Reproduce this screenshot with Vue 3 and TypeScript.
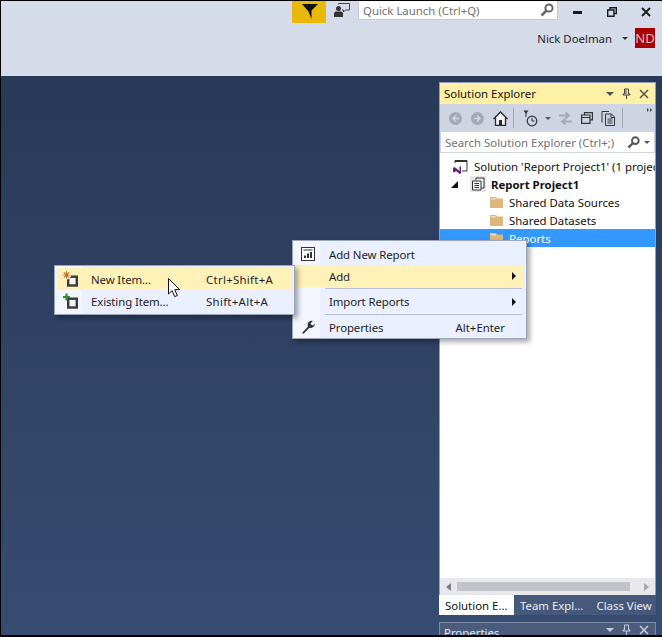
<script setup lang="ts">
const treeItems = [
  { label: 'Shared Data Sources', selected: false },
  { label: 'Shared Datasets', selected: false },
  { label: 'Reports', selected: true },
]
</script>

<template>
  <div class="frame">
    <header class="topbar">
      <div class="row-one">
        <div class="filter">
          <svg width="16" height="15" viewBox="0 0 16 15"><path d="M0 0h16L9.500 6.500V15L6.500 7.500z" fill="#111" /></svg>
        </div>
        <svg class="feedback" width="16" height="14" viewBox="0 0 16 14">
          <circle cx="4.500" cy="5.500" r="2.500" fill="#333" />
          <path d="M0 14v-4l1.500-1.500h6L9 10v4z" fill="#333" />
          <path d="M4.500 1.500V.5h11v6.500h-4l-2 2V7H8" fill="none" stroke="#444" />
        </svg>
        <div class="quick">
          <span>Quick Launch (Ctrl+Q)</span>
          <svg width="14" height="14" viewBox="0 0 14 14"><circle cx="9" cy="5" r="3.600" fill="none" stroke="#666" stroke-width="2" /><path d="M6.500 7.500L1.500 12.500" stroke="#666" stroke-width="2.500" /></svg>
        </div>
        <div class="winctl">
          <svg width="9" height="3" viewBox="0 0 9 3" class="min"><rect width="9" height="3" fill="#1a1a1a" /></svg>
          <svg width="10" height="10" viewBox="0 0 10 10"><path d="M3 2.500V.7h6.300v5.800H7M.7 3h6.300v6.300H.7z" fill="none" stroke="#1a1a1a" stroke-width="1.400" /></svg>
          <svg width="10" height="10" viewBox="0 0 10 10"><path d="M1 1l8 8M9 1L1 9" stroke="#1a1a1a" stroke-width="1.800" /></svg>
        </div>
      </div>
      <div class="row-two">
        <span class="user">Nick Doelman</span>
        <span class="caret"></span>
        <span class="avatar">ND</span>
      </div>
    </header>

    <main class="workspace">
      <aside class="column">
        <section class="explorer">
          <div class="titlebar">
            <span>Solution Explorer</span>
            <span class="title-tools">
              <span class="caret dark"></span>
              <svg width="9" height="12" viewBox="0 0 9 12"><path d="M2.500 1h4v5h1.500v1H1V6h1.500zM4 1.500v4.500M4.500 7v4" fill="none" stroke="#444" /></svg>
              <svg width="10" height="10" viewBox="0 0 10 10"><path d="M1 1l8 8M9 1L1 9" stroke="#555" stroke-width="1.500" /></svg>
            </span>
          </div>
          <div class="toolbar">
            <svg width="13" height="13" viewBox="0 0 13 13"><circle cx="6.500" cy="6.500" r="6.500" fill="#a5a9b2" /><path d="M7 3.500L4 6.500l3 3M4 6.500h6" fill="none" stroke="#d0d6e4" stroke-width="1.500" /></svg>
            <svg class="gap-next" width="13" height="13" viewBox="0 0 13 13"><circle cx="6.500" cy="6.500" r="6.500" fill="#a5a9b2" /><path d="M6 3.500l3 3-3 3M9 6.500H3" fill="none" stroke="#d0d6e4" stroke-width="1.500" /></svg>
            <svg class="gap-home" width="15" height="15" viewBox="0 0 15 15"><path d="M2.500 6.500v8h10v-8L7.500 1.500z" fill="#f2f3f7" /><path d="M.5 8L7.500 1l7 7M2.500 6.500v8h10v-8" fill="none" stroke="#2a2a2a" stroke-width="1.300" /><rect x="6" y="9" width="3" height="5.500" fill="#2a2a2a" /></svg>
            <span class="divider home-divider"></span>
            <svg class="gap-clock" width="15" height="17" viewBox="0 0 15 17"><circle cx="9" cy="11" r="4.800" fill="none" stroke="#333" stroke-width="1.200" /><path d="M9 8v3h2.500" fill="none" stroke="#333" /><path d="M.5.500h5L3 4z" fill="#333" /><path d="M3 3v4" stroke="#333" /></svg>
            <span class="caret dark small"></span>
            <svg class="gap-sync" width="13" height="13" viewBox="0 0 13 13"><path d="M0 3.500h9M6.500 .5l3.500 3-3.500 3M13 9.500H4M6.500 6.500L3 9.500l3.500 3" fill="none" stroke="#a5a9b2" stroke-width="1.800" /></svg>
            <svg class="gap-copy" width="12" height="12" viewBox="0 0 12 12"><path d="M3.500 2.500V.6h7.900v7.300H9M.6 3h8.400v8.400H.6zM.6 5.500H9" fill="none" stroke="#333" stroke-width="1.200" /></svg>
            <svg class="gap-pages" width="14" height="15" viewBox="0 0 14 15"><path d="M1 11.500V.5h7M4.500 3h6l3 3v8.500h-9zM10 3v3.500h3.500" fill="none" stroke="#333" /><path d="M6.500 8h5M6.500 10h5M6.500 12h5" stroke="#333" /></svg>
            <span class="divider last-divider"></span>
            <span class="more">
              <span class="tri"></span><span class="tri"></span>
            </span>
          </div>
          <div class="search">
            <span>Search Solution Explorer (Ctrl+;)</span>
            <span class="search-tools">
              <svg width="13" height="13" viewBox="0 0 14 14"><circle cx="9" cy="5" r="3.600" fill="none" stroke="#555" stroke-width="2" /><path d="M6.500 7.500L1.500 12.500" stroke="#555" stroke-width="2.500" /></svg>
              <span class="caret dark small"></span>
            </span>
          </div>
          <div class="tree">
            <div class="node solution">
              <svg width="15" height="15" viewBox="0 0 15 15">
                <path d="M2 4V1.500h12v10.500H9" fill="none" stroke="#333" />
                <path d="M2 1h12v2H2z" fill="#333" />
                <path d="M1 8l2 1 3.500 3V7l1.500.8v6.500L6.500 15 3 12l-1.500 1.500L0 12.800V9.200z" fill="#68217a" />
              </svg>
              <span>Solution 'Report Project1' (1 project)</span>
            </div>
            <div class="node project">
              <span class="expander"></span>
              <svg class="project-icon" width="16" height="16" viewBox="0 0 16 16">
                <rect width="16" height="16" fill="#e6e6e6" />
                <path d="M6 4V2h8v10h-2.500M2.500 5h8.500v9H2.500z" fill="#f6f6f6" stroke="#333" />
                <path d="M4.500 7.500h4.500M4.500 9.500h4.500M4.500 11.500h4.500" stroke="#333" />
              </svg>
              <b>Report Project1</b>
            </div>
            <div v-for="item in treeItems" :key="item.label" class="node leaf" :class="{ selected: item.selected }">
              <svg class="folder" width="13" height="11" viewBox="0 0 13 11">
                <path d="M0 0h6l1 1.500h6V11H0z" fill="#dcb67a" />
                <path d="M1 1h4.500l1 1.500H1z" fill="#eedcb8" />
              </svg>
              <span>{{ item.label }}</span>
            </div>
          </div>
          <div class="hscroll">
            <span class="arrow left"></span>
            <span class="thumb"></span>
            <span class="arrow right"></span>
          </div>
        </section>
        <nav class="tabs">
          <span class="tab active">Solution E...</span>
          <span class="tab">Team Expl...</span>
          <span class="tab">Class View</span>
        </nav>
        <section class="properties">
          <span>Properties</span>
          <span class="title-tools light">
            <span class="caret light-caret"></span>
            <svg width="9" height="12" viewBox="0 0 9 12"><path d="M2.500 1h4v5h1.500v1H1V6h1.500zM4.500 7v4" fill="none" stroke="#c8cfdc" /></svg>
            <svg width="10" height="10" viewBox="0 0 10 10"><path d="M1 1l8 8M9 1L1 9" stroke="#c8cfdc" stroke-width="1.500" /></svg>
          </span>
        </section>
      </aside>
    </main>

    <div class="menu menu-main">
      <div class="item">
        <span class="gutter">
          <svg width="14" height="14" viewBox="0 0 14 14"><rect x=".5" y=".5" width="13" height="13" fill="#fff" stroke="#333" /><path d="M2.500 3h9" stroke="#333" /><path d="M3 11V8.500h2V11zM6 11V6.500h2V11zM9 11V5h2v6z" fill="#333" /></svg>
        </span>
        <span class="label">Add New Report</span>
      </div>
      <div class="item hot">
        <span class="gutter"></span>
        <span class="label">Add</span>
        <span class="submenu"></span>
      </div>
      <div class="rule"></div>
      <div class="item tight">
        <span class="gutter"></span>
        <span class="label">Import Reports</span>
        <span class="submenu"></span>
      </div>
      <div class="rule"></div>
      <div class="item">
        <span class="gutter">
          <svg width="14" height="14" viewBox="0 0 14 14"><path d="M1 13l6-6.500C6 4 7 1 10.500.8c.6 0 1 .1 1.300.3L9.500 3.500l1 1.500 1.800.4 1.400-2.200c.5 2.800-1.800 5.400-5.200 4.500L2.500 13.800z" fill="#333" /></svg>
        </span>
        <span class="label">Properties</span>
        <span class="shortcut">Alt+Enter</span>
      </div>
    </div>

    <div class="menu menu-sub">
      <div class="item hot">
        <span class="gutter">
          <svg width="16" height="16" viewBox="0 0 16 16">
            <rect x="6.200" y="5.700" width="8.600" height="8.800" fill="#f4f4f4" stroke="#3a3a3a" stroke-width="2.400" />
            <circle cx="4.500" cy="4" r="4.500" fill="#fff" />
            <path d="M4.500 0v8M.5 4h8M1.700 1.200l5.600 5.600M7.300 1.200L1.700 6.800" stroke="#c8761a" stroke-width="1.100" />
            <circle cx="4.500" cy="4" r="1.500" fill="#c8761a" />
          </svg>
        </span>
        <span class="label">New Item...</span>
        <span class="shortcut">Ctrl+Shift+A</span>
      </div>
      <div class="item">
        <span class="gutter">
          <svg width="16" height="16" viewBox="0 0 16 16">
            <rect x="6.200" y="5.700" width="8.600" height="8.800" fill="#f4f4f4" stroke="#3a3a3a" stroke-width="2.400" />
            <path d="M4.500 .5v7M1 4h7" stroke="#2f8f2f" stroke-width="2.200" />
          </svg>
        </span>
        <span class="label">Existing Item...</span>
        <span class="shortcut">Shift+Alt+A</span>
      </div>
    </div>

    <svg class="cursor" width="13" height="20" viewBox="0 0 13 20">
      <path d="M.5.500v15.500l3.600-3.400 2.600 6 2.600-1.100-2.600-5.900h5z" fill="#fff" stroke="#111" />
    </svg>
  </div>
</template>

<style scoped>
.frame {
  position: relative;
  width: 662px;
  height: 637px;
  box-sizing: border-box;
  border-top: 1px solid #000;
  border-left: 1px solid #000;
  border-bottom: 2px solid #000;
  display: flex;
  flex-direction: column;
  overflow: hidden;
  font-family: "Noto Sans", "Open Sans", sans-serif;
  font-size: 11.4px;
  color: #1e1e1e;
  background: #2b3a58;
}
.topbar {
  height: 75px;
  flex: none;
  background: #d6dbe9;
}
.row-one {
  display: flex;
  align-items: flex-start;
  height: 24px;
  padding-left: 291px;
}
.filter {
  width: 34px;
  height: 22px;
  background: #e8b908;
  display: flex;
  justify-content: center;
  align-items: flex-start;
  padding: 3px 0 0 1px;
  box-sizing: border-box;
}
.feedback {
  margin: 2px 8px 0 8px;
  flex: none;
}
.quick {
  width: 200px;
  height: 19px;
  box-sizing: border-box;
  background: #fff;
  border: 1px solid #c3c9d8;
  border-top: 0;
  color: #717171;
  display: flex;
  justify-content: space-between;
  align-items: center;
  padding: 0 3px 0 4px;
}
.winctl {
  display: flex;
  align-items: center;
  height: 22px;
  margin-left: 15px;
  gap: 24px;
}
.winctl .min { margin-right: 1px; }
.row-two {
  display: flex;
  align-items: center;
  justify-content: flex-end;
  height: 20px;
  margin-top: 3px;
  padding-right: 7px;
}
.caret {
  display: inline-block;
  border-left: 3px solid transparent;
  border-right: 3px solid transparent;
  border-top: 3px solid #333;
  margin: 0 7px 0 10px;
}
.caret.dark {
  margin: 0;
  border-left-width: 4px;
  border-right-width: 4px;
  border-top: 4px solid #555;
}
.caret.small {
  border-left-width: 3px;
  border-right-width: 3px;
  border-top-width: 3px;
}
.avatar {
  width: 20px;
  height: 20px;
  background: #a80000;
  color: #e6b9b9;
  display: flex;
  align-items: center;
  justify-content: center;
  font-size: 13px;
}
.workspace {
  flex: 1;
  min-height: 0;
  display: flex;
  justify-content: flex-end;
  background: linear-gradient(#293a58, #364c71);
  padding-right: 6px;
}
.column {
  width: 217px;
  display: flex;
  flex-direction: column;
  padding-top: 6px;
}
.explorer {
  flex: 1;
  min-height: 0;
  display: flex;
  flex-direction: column;
  border: 1px solid #93a0b8;
  border-bottom: 0;
  background: #fff;
}
.titlebar {
  height: 21px;
  flex: none;
  background: #fff0a8;
  padding: 0 6px 0 4px;
  display: flex;
  justify-content: space-between;
  align-items: center;
  color: #111;
}
.title-tools {
  display: flex;
  align-items: center;
  gap: 8px;
}
.toolbar {
  height: 28px;
  flex: none;
  background: #ced4e2;
  display: flex;
  align-items: center;
  padding-left: 9px;
  position: relative;
}
.gap-next { margin-left: 9px; }
.gap-home { margin-left: 9px; }
.divider {
  width: 1px;
  height: 20px;
  background: #9da5b7;
}
.home-divider { margin-left: 5px; }
.gap-clock { margin-left: 9px; }
.toolbar .caret { margin-left: 7px; }
.gap-sync { margin-left: 8px; }
.gap-copy { margin-left: 9px; }
.gap-pages { margin-left: 8px; }
.last-divider { margin-left: 7px; }
.more {
  position: absolute;
  right: 3px;
  top: 4px;
  display: flex;
  gap: 1px;
}
.tri {
  border-left: 2px solid #444;
  border-top: 2px solid transparent;
  border-bottom: 2px solid transparent;
}
.search {
  height: 21px;
  flex: none;
  box-sizing: border-box;
  background: #fff;
  border: 1px solid #ced4e2;
  border-top: 0;
  color: #717171;
  display: flex;
  justify-content: space-between;
  align-items: center;
  padding: 0 4px 0 4px;
}
.search-tools {
  display: flex;
  align-items: center;
  gap: 4px;
}
.tree {
  flex: 1;
  min-height: 0;
  overflow: hidden;
  padding-top: 4px;
}
.node {
  height: 18px;
  display: flex;
  align-items: center;
  white-space: nowrap;
  color: #111;
}
.node svg { flex: none; }
.solution {
  padding-left: 13px;
  gap: 6px;
}
.project {
  padding-left: 11px;
}
.expander {
  width: 0;
  height: 0;
  border-left: 7px solid transparent;
  border-bottom: 7px solid #111;
  margin-right: 12px;
}
.project b {
  margin-left: 5px;
  font-weight: 700;
}
.leaf {
  padding-left: 50px;
  gap: 6px;
}
.leaf.selected {
  background: #3399ff;
  color: #fff;
}
.hscroll {
  height: 17px;
  flex: none;
  background: #e8e8ec;
  display: flex;
  align-items: center;
  padding-left: 6px;
  gap: 6px;
}
.thumb {
  width: 173px;
  height: 9px;
  background: #c2c3c9;
}
.arrow {
  width: 0;
  height: 0;
  border-top: 4px solid transparent;
  border-bottom: 4px solid transparent;
}
.arrow.left { border-right: 5px solid #7d7f85; }
.arrow.right { border-left: 5px solid #a5a7ac; margin-left: 8px; }
.tabs {
  height: 20px;
  flex: none;
  display: flex;
  color: #e8edf5;
  background: #47597a;
  margin-bottom: 7px;
  overflow: hidden;
}
.tab {
  flex: none;
  padding: 0 7px 0 6px;
  display: flex;
  align-items: center;
  white-space: nowrap;
}
.tab.active {
  background: #fff;
  color: #111;
  width: 75px;
  box-sizing: border-box;
  padding: 0 4px 0 6px;
}
.properties {
  height: 13px;
  flex: none;
  box-sizing: border-box;
  background: #4b5c7c;
  border: 1px solid #7e8ba6;
  border-bottom: 0;
  color: #e5e9f2;
  display: flex;
  justify-content: space-between;
  padding: 2px 6px 0 4px;
  overflow: hidden;
}
.light-caret {
  margin: 0;
  border-left: 4px solid transparent;
  border-right: 4px solid transparent;
  border-top: 4px solid #c8cfdc;
}
.menu {
  position: absolute;
  box-sizing: border-box;
  background: #eaf0ff;
  border: 1px solid #9ba6bc;
  box-shadow: 3px 3px 5px rgba(0, 0, 0, .35);
  color: #1e1e1e;
}
.menu::before {
  content: "";
  position: absolute;
  left: 0;
  top: 0;
  bottom: 0;
  width: 27px;
  background: #f3f6ff;
}
.menu-main {
  left: 291px;
  top: 239px;
  width: 235px;
  height: 99px;
  padding: 2px;
}
.menu-sub {
  left: 53px;
  top: 264px;
  width: 241px;
  height: 50px;
  padding: 2px;
}
.item {
  position: relative;
  height: 22px;
  display: flex;
  align-items: center;
}
.item.hot { background: #fff2b8; }
.item.tight { height: 23px; }
.gutter {
  width: 25px;
  flex: none;
  display: flex;
  align-items: center;
  justify-content: center;
}
.label {
  margin-left: 9px;
  flex: 1;
  letter-spacing: -.1px;
}
.shortcut {
  margin-right: 19px;
}
.menu-sub .shortcut {
  position: absolute;
  left: 149px;
  margin: 0;
  letter-spacing: .3px;
}
.submenu {
  width: 0;
  height: 0;
  border-left: 4px solid #111;
  border-top: 4px solid transparent;
  border-bottom: 4px solid transparent;
  margin-right: 8px;
}
.rule {
  position: relative;
  height: 1px;
  margin: 1px 2px 1px 30px;
  background: #b8bfce;
}
.cursor {
  position: absolute;
  left: 167px;
  top: 277px;
}
</style>
